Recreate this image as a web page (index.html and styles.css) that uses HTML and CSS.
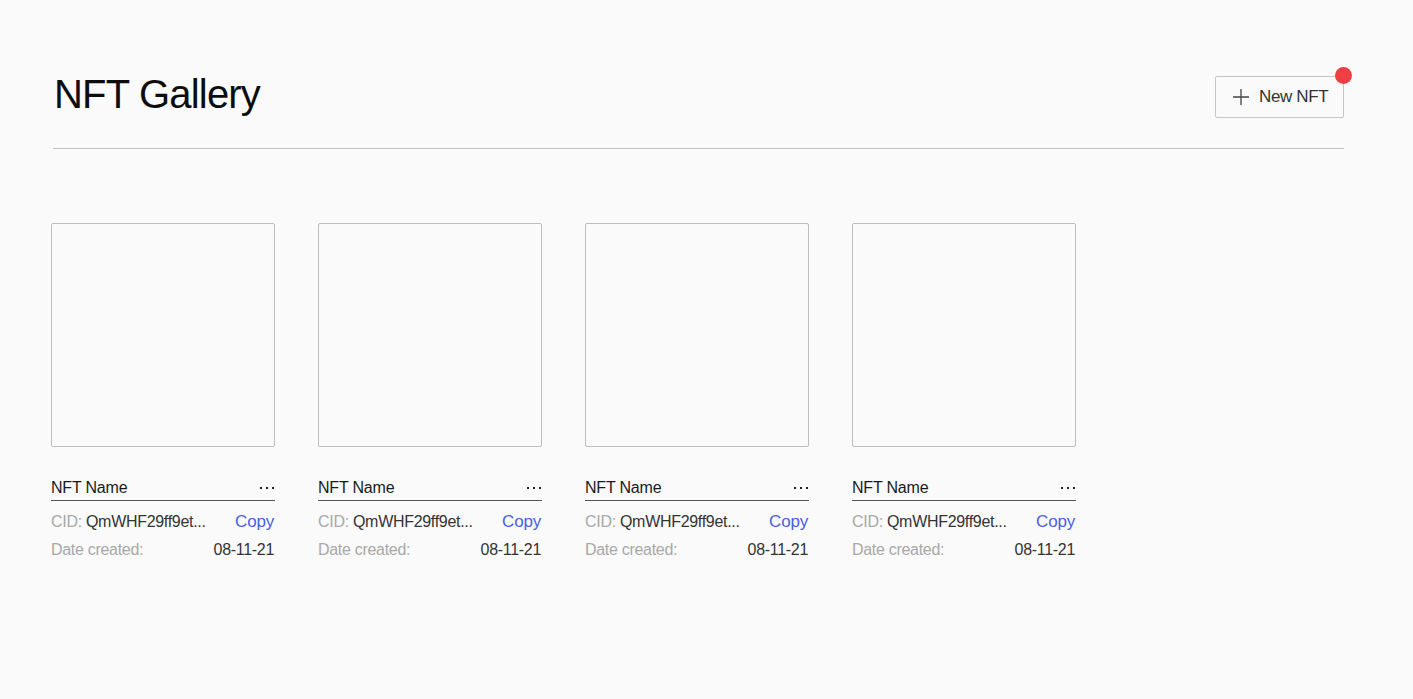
FILE: index.html
```html
<!DOCTYPE html>
<html lang="en">
<head>
<meta charset="utf-8">
<title>NFT Gallery</title>
<link rel="stylesheet" href="styles.css">
</head>
<body>
<main class="page">
  <header class="header">
    <h1 class="title">NFT Gallery</h1>
    <button class="new-btn" type="button">
      <svg class="plus" width="16" height="16" viewBox="0 0 16 16"><path d="M8 0v16M0 8h16" stroke="#444" stroke-width="1.3" fill="none"/></svg>
      <span>New NFT</span>
      <span class="dot"></span>
    </button>
  </header>

  <section class="gallery">
    <article class="card">
      <div class="thumb"></div>
      <div class="name-row"><span class="name">NFT Name</span><svg class="more" width="14" height="4" viewBox="0 0 14 4"><rect x="0" y="1" width="2" height="2"/><rect x="6" y="1" width="2" height="2"/><rect x="12" y="1" width="2" height="2"/></svg></div>
      <div class="meta-row first"><span><span class="label">CID:</span> <span class="value">QmWHF29ff9et...</span></span><a class="copy" href="#">Copy</a></div>
      <div class="meta-row"><span class="label">Date created:</span><span class="value">08-11-21</span></div>
    </article>
    <article class="card">
      <div class="thumb"></div>
      <div class="name-row"><span class="name">NFT Name</span><svg class="more" width="14" height="4" viewBox="0 0 14 4"><rect x="0" y="1" width="2" height="2"/><rect x="6" y="1" width="2" height="2"/><rect x="12" y="1" width="2" height="2"/></svg></div>
      <div class="meta-row first"><span><span class="label">CID:</span> <span class="value">QmWHF29ff9et...</span></span><a class="copy" href="#">Copy</a></div>
      <div class="meta-row"><span class="label">Date created:</span><span class="value">08-11-21</span></div>
    </article>
    <article class="card">
      <div class="thumb"></div>
      <div class="name-row"><span class="name">NFT Name</span><svg class="more" width="14" height="4" viewBox="0 0 14 4"><rect x="0" y="1" width="2" height="2"/><rect x="6" y="1" width="2" height="2"/><rect x="12" y="1" width="2" height="2"/></svg></div>
      <div class="meta-row first"><span><span class="label">CID:</span> <span class="value">QmWHF29ff9et...</span></span><a class="copy" href="#">Copy</a></div>
      <div class="meta-row"><span class="label">Date created:</span><span class="value">08-11-21</span></div>
    </article>
    <article class="card">
      <div class="thumb"></div>
      <div class="name-row"><span class="name">NFT Name</span><svg class="more" width="14" height="4" viewBox="0 0 14 4"><rect x="0" y="1" width="2" height="2"/><rect x="6" y="1" width="2" height="2"/><rect x="12" y="1" width="2" height="2"/></svg></div>
      <div class="meta-row first"><span><span class="label">CID:</span> <span class="value">QmWHF29ff9et...</span></span><a class="copy" href="#">Copy</a></div>
      <div class="meta-row"><span class="label">Date created:</span><span class="value">08-11-21</span></div>
    </article>
  </section>
</main>
</body>
</html>
```

FILE: styles.css
```css
* { box-sizing: border-box; }

html, body {
  margin: 0;
  padding: 0;
  background: #fafafa;
  font-family: "Liberation Sans", Arial, Helvetica, sans-serif;
  color: #222;
}

.page {
  width: 1413px;
  height: 699px;
  padding: 70px 69px 0 51px;
}

.header {
  display: flex;
  justify-content: space-between;
  align-items: flex-start;
  margin-left: 2px;
  padding-bottom: 30px;
  border-bottom: 1px solid #c4c4c4;
}

.title {
  margin: 0 0 0 1px;
  font-size: 40px;
  line-height: 48px;
  font-weight: 400;
  letter-spacing: -0.8px;
  color: #0d0d0d;
}

.new-btn {
  position: relative;
  margin-top: 6px;
  width: 129px;
  height: 42px;
  display: flex;
  align-items: center;
  gap: 10px;
  padding: 0 0 0 17px;
  background: #fafafa;
  border: 1px solid #c4c4c4;
  border-radius: 2px;
  font-family: inherit;
  font-size: 17px;
  letter-spacing: -0.35px;
  color: #333;
  cursor: pointer;
}

.plus { flex: none; }

.dot {
  position: absolute;
  top: -10px;
  right: -9px;
  width: 17px;
  height: 17px;
  border-radius: 50%;
  background: #ee4044;
}

.gallery {
  display: flex;
  gap: 43px;
  margin-top: 74px;
}

.card {
  width: 224px;
}

.thumb {
  width: 224px;
  height: 224px;
  border: 1px solid #bdbdbd;
  border-radius: 2px;
  background: #fafafa;
}

.name-row {
  display: flex;
  justify-content: space-between;
  align-items: center;
  margin-top: 31px;
  padding-bottom: 2px;
  border-bottom: 1px solid #555;
  font-size: 16px;
  line-height: 20px;
  color: #1a1a1a;
}

.name { letter-spacing: -0.2px; }

.more {
  fill: #222;
  margin-right: 1px;
}

.meta-row {
  display: flex;
  justify-content: space-between;
  padding-right: 1px;
  font-size: 16px;
  line-height: 28px;
  letter-spacing: -0.3px;
}

.meta-row.first { padding-top: 7px; }

.label { color: #a8a8a8; }

.value { color: #333; }

.copy {
  color: #4a5ee6;
  text-decoration: none;
  font-size: 17px;
  letter-spacing: -0.2px;
}
```
